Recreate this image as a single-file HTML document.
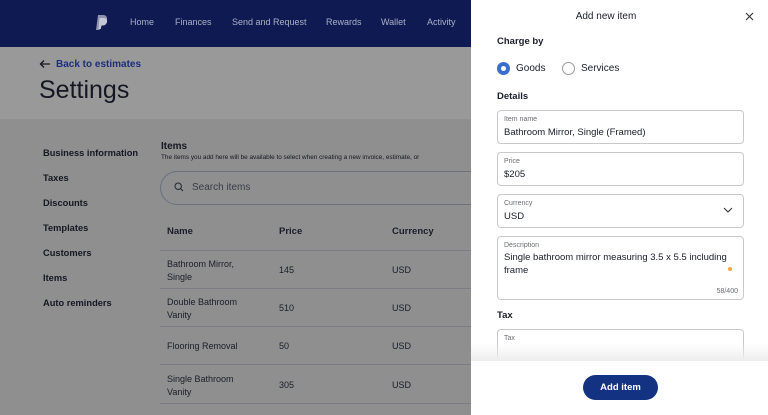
<!DOCTYPE html>
<html><head><meta charset="utf-8"><style>
*{margin:0;padding:0;box-sizing:border-box}
body{width:768px;height:415px;overflow:hidden;font-family:"Liberation Sans",sans-serif;background:#8f8f8f;position:relative;color:#1a1d2a}
.nav{position:absolute;left:0;top:0;width:768px;height:47px;background:#101a52}
.nav span{position:absolute;top:17px;font-size:9px;color:#aab0c8}
.hdr{position:absolute;top:47px;left:0;width:768px;height:72px;background:#999}
.a{position:absolute;font-size:10px}
.side{position:absolute;left:43px;font-size:9.3px;font-weight:bold;color:#151822}
.row{position:absolute;left:160px;width:320px;border-top:1px solid #7b7d85}
.panel{position:absolute;left:471px;top:0;width:297px;height:415px;background:#fff}
.f{position:absolute;left:26px;width:247px;border:1px solid #c8c9cc;border-radius:4px}
.lab{position:absolute;left:6px;font-size:7px;color:#6b6e75}
.val{position:absolute;left:6px;font-size:9.5px;color:#1a1d2a}
</style></head><body>
<div class="nav">
<svg style="position:absolute;left:96px;top:15px" width="12" height="15" viewBox="0 0 12 15"><path d="M2 0h5c3 0 4.5 2 4 4.5S8.5 9 6 9H4.5L3.5 15H0z" fill="#8e93ad"/><path d="M3.5 3h4.5c2.5 0 3.5 2 3 4S9 10.5 7 10.5H5.5L4.8 14H2.5z" fill="#c4c7d6"/></svg>
<span style="left:130px">Home</span><span style="left:175px">Finances</span><span style="left:232px">Send and Request</span><span style="left:326px">Rewards</span><span style="left:381px">Wallet</span><span style="left:427px">Activity</span>
</div>
<div class="hdr"></div>
<svg style="position:absolute;left:39px;top:59px" width="12" height="10" viewBox="0 0 12 10"><path d="M11 5H1.5M5 1.5L1.5 5 5 8.5" stroke="#151822" stroke-width="1.3" fill="none"/></svg>
<div class="a" style="left:56px;top:59px;font-weight:bold;color:#1c2f78">Back to estimates</div>
<div class="a" style="left:39px;top:76px;font-size:25px;color:#151822">Settings</div>
<div class="side" style="top:148px">Business information</div>
<div class="side" style="top:173px">Taxes</div>
<div class="side" style="top:198px">Discounts</div>
<div class="side" style="top:223px">Templates</div>
<div class="side" style="top:248px">Customers</div>
<div class="side" style="top:273px">Items</div>
<div class="side" style="top:298px">Auto reminders</div>
<div class="a" style="left:161px;top:141px;font-weight:bold;color:#151822">Items</div>
<div class="a" style="left:161px;top:154px;font-size:6.4px;color:#151822;white-space:nowrap">The items you add here will be available to select when creating a new invoice, estimate, or</div>
<div style="position:absolute;left:160px;top:171px;width:340px;height:34px;border:1px solid #6b6f80;border-radius:17px"></div>
<svg style="position:absolute;left:174px;top:182px" width="10" height="10" viewBox="0 0 10 10"><circle cx="4.2" cy="4.2" r="3.2" stroke="#2a2d38" stroke-width="1.1" fill="none"/><path d="M6.6 6.6L9 9" stroke="#2a2d38" stroke-width="1.1"/></svg>
<div class="a" style="left:192px;top:182px;color:#3a3d48">Search items</div>
<div class="a" style="left:167px;top:226px;font-weight:bold;font-size:9.5px">Name</div>
<div class="a" style="left:279px;top:226px;font-weight:bold;font-size:9.5px">Price</div>
<div class="a" style="left:392px;top:226px;font-weight:bold;font-size:9.5px">Currency</div>
<div class="row" style="top:250px"></div><div class="row" style="top:288px"></div><div class="row" style="top:326px"></div><div class="row" style="top:364px"></div><div class="row" style="top:403px"></div>
<div class="a" style="left:167px;top:258px;font-size:9px;line-height:13px">Bathroom Mirror,<br>Single</div><div class="a" style="left:279px;top:265px;font-size:9px">145</div><div class="a" style="left:392px;top:265px;font-size:9px">USD</div>
<div class="a" style="left:167px;top:296px;font-size:9px;line-height:13px">Double Bathroom<br>Vanity</div><div class="a" style="left:279px;top:303px;font-size:9px">510</div><div class="a" style="left:392px;top:303px;font-size:9px">USD</div>
<div class="a" style="left:167px;top:341px;font-size:9px">Flooring Removal</div><div class="a" style="left:279px;top:341px;font-size:9px">50</div><div class="a" style="left:392px;top:341px;font-size:9px">USD</div>
<div class="a" style="left:167px;top:373px;font-size:9px;line-height:13px">Single Bathroom<br>Vanity</div><div class="a" style="left:279px;top:380px;font-size:9px">305</div><div class="a" style="left:392px;top:380px;font-size:9px">USD</div>

<div class="panel">
<div class="a" style="left:0;width:270px;text-align:center;top:11px;font-size:10px">Add new item</div>
<svg style="position:absolute;left:274px;top:12px" width="9" height="9" viewBox="0 0 9 9"><path d="M1 1l7 7M8 1L1 8" stroke="#333" stroke-width="1.1"/></svg>
<div class="a" style="left:26px;top:36px;font-weight:bold;font-size:9.5px">Charge by</div>
<div style="position:absolute;left:26px;top:62px;width:13px;height:13px;border-radius:50%;background:#3a6fd0"><div style="position:absolute;left:4px;top:4px;width:5px;height:5px;background:#fff;border-radius:50%"></div></div>
<div class="a" style="left:45px;top:63px;font-size:10px">Goods</div>
<div style="position:absolute;left:91px;top:62px;width:13px;height:13px;border-radius:50%;border:1px solid #999"></div>
<div class="a" style="left:110px;top:63px;font-size:10px">Services</div>
<div class="a" style="left:26px;top:91px;font-weight:bold;font-size:9.5px">Details</div>
<div class="f" style="top:110px;height:34px"><div class="lab" style="top:5px">Item name</div><div class="val" style="top:16px">Bathroom Mirror, Single (Framed)</div></div>
<div class="f" style="top:152px;height:34px"><div class="lab" style="top:5px">Price</div><div class="val" style="top:16px">$205</div></div>
<div class="f" style="top:194px;height:34px"><div class="lab" style="top:5px">Currency</div><div class="val" style="top:16px">USD</div>
<svg style="position:absolute;left:225px;top:12px" width="10" height="6" viewBox="0 0 10 6"><path d="M1 1l4 4 4-4" stroke="#333" stroke-width="1.1" fill="none"/></svg></div>
<div class="f" style="top:236px;height:64px"><div class="lab" style="top:5px">Description</div><div class="val" style="top:15px;line-height:12.5px;width:240px">Single bathroom mirror measuring 3.5 x 5.5 including frame</div>
<div style="position:absolute;left:230px;top:30px;width:4px;height:4px;border-radius:50%;background:#f0a940"></div>
<div style="position:absolute;right:5px;top:51px;font-size:7px;color:#6b6e75">58/400</div></div>
<div class="a" style="left:26px;top:310px;font-weight:bold;font-size:9.5px">Tax</div>
<div class="f" style="top:329px;height:30px;border-bottom:none;border-radius:4px 4px 0 0"><div class="lab" style="top:5px">Tax</div></div>
<div style="position:absolute;left:0;top:343px;width:297px;height:18px;background:linear-gradient(#fff0,#eee)"></div>
<div style="position:absolute;left:0;top:361px;width:297px;height:54px;background:#fff"></div>
<div style="position:absolute;left:112px;top:375px;width:75px;height:25px;border-radius:13px;background:#143282;color:#fff;font-weight:bold;font-size:9.5px;text-align:center;line-height:25px">Add item</div>
</div>
</body></html>
